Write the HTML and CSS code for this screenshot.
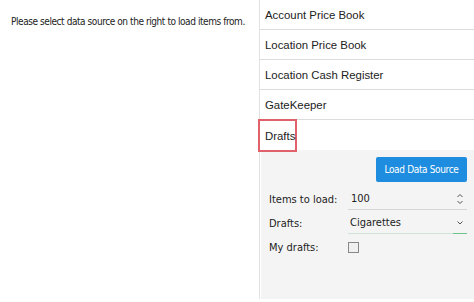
FILE: index.html
```html
<!DOCTYPE html>
<html>
<head>
<meta charset="utf-8">
<link rel="stylesheet" href="styles.css">
</head>
<body>
<div class="app">
  <div class="main">
    <p class="hint">Please select data source on the right to load items from.</p>
  </div>
  <div class="side">
    <ul class="sources">
      <li class="src">Account Price Book</li>
      <li class="src">Location Price Book</li>
      <li class="src">Location Cash Register</li>
      <li class="src">GateKeeper</li>
      <li class="src last"><span class="sel">Drafts</span></li>
    </ul>
    <div class="panel">
      <div class="btnrow"><button class="load">Load Data Source</button></div>
      <div class="field">
        <span class="label">Items to load:</span>
        <div class="ctrl num"><span>100</span>
          <svg class="spin" width="8" height="12" viewBox="0 0 8 12"><path d="M1.5 4 L4 1.5 L6.5 4" fill="none" stroke="#555" stroke-width="1"/><path d="M1.5 8 L4 10.5 L6.5 8" fill="none" stroke="#555" stroke-width="1"/></svg>
        </div>
      </div>
      <div class="field">
        <span class="label">Drafts:</span>
        <div class="ctrl sel2"><span>Cigarettes</span>
          <svg class="caret" width="8" height="6" viewBox="0 0 8 6"><path d="M1.5 1.5 L4 4 L6.5 1.5" fill="none" stroke="#555" stroke-width="1"/></svg>
        </div>
      </div>
      <div class="field">
        <span class="label">My drafts:</span>
        <span class="check"></span>
      </div>
    </div>
  </div>
</div>
</body>
</html>
```
FILE: styles.css
```css
html, body { margin: 0; padding: 0; background: #fff; }
.app { display: flex; width: 474px; height: 302px; }
.main { width: 259px; flex: none; }
.hint { margin: 16px 0 0 11px; font-family: "DejaVu Sans Condensed", "DejaVu Sans", sans-serif; font-size: 10px; letter-spacing: -0.43px; white-space: nowrap; color: #222; }
.side { flex: 1; border-left: 1px solid #e2e2e2; display: flex; flex-direction: column; height: 299px; }
.sources { list-style: none; margin: 0; padding: 0; }
.src { height: 29px; border-bottom: 1px solid #dcdcdc; font-family: "Liberation Sans", Arial, sans-serif; font-size: 11.4px; color: #222; display: flex; align-items: center; padding-left: 5px; }
.src.last { padding-left: 0; border-bottom: none; height: 30px; align-items: flex-start; }
.sel { position: relative; z-index: 1; border: 2px solid #e0616a; height: 33px; margin: -1px 0 0 -2px; display: flex; align-items: center; padding: 0 0 0 5px; box-sizing: border-box; width: 39px; }
.panel { flex: 1; background: #f4f4f4; margin-left: 1px; padding: 7px 7px 0 8px; font-family: "DejaVu Sans Condensed", "DejaVu Sans", sans-serif; font-size: 11px; color: #222; }
.btnrow { display: flex; justify-content: flex-end; }
.load { background: #1e8ddf; color: #fff; border: none; border-radius: 2px; height: 25px; width: 91px; font-family: "DejaVu Sans Condensed", "DejaVu Sans", sans-serif; font-size: 10px; letter-spacing: -0.35px; padding: 0; }
.field { display: flex; align-items: center; height: 24px; }
.field:nth-child(2) { margin-top: 5px; }
.label { width: 79px; flex: none; }
.ctrl { flex: 1; display: flex; align-items: center; justify-content: space-between; height: 20px; border-bottom: 1px solid #d6d6d6; padding: 0 3px 0 3px; }
.sel2 { border-bottom-color: #cfe3d6; position: relative; padding-left: 2px; }
.sel2::after { content: ""; position: absolute; right: 0; bottom: -1px; width: 14px; height: 1px; background: #6cc28a; }
.check { width: 9px; height: 9px; border: 1px solid #888; background: #f0f0f0; }
```
